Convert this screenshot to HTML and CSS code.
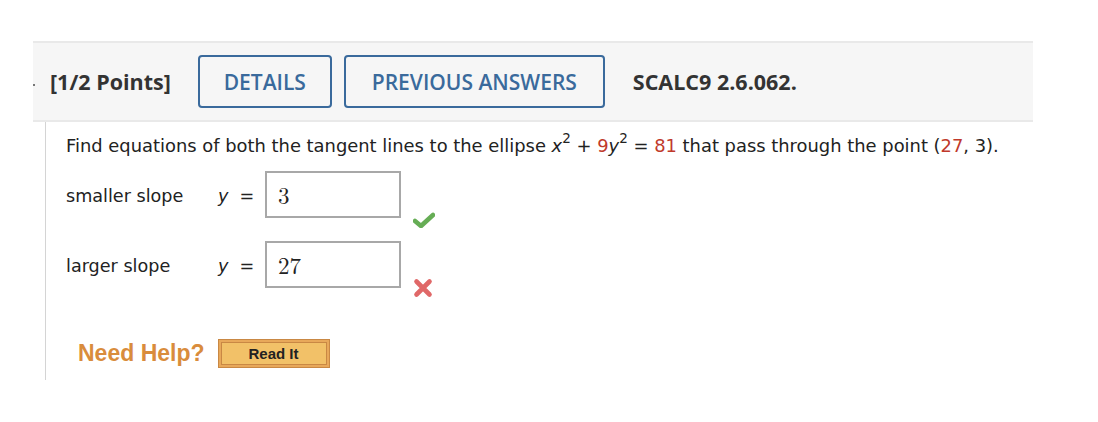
FILE: index.html
```html
<!DOCTYPE html>
<html>
<head>
<meta charset="utf-8">
<link rel="stylesheet" href="styles.css">
</head>
<body>
<div class="wrap">
  <div class="head">
    <span class="dot"></span>
    <span class="points">[1/2 Points]</span>
    <button class="btn btn-details">DETAILS</button>
    <button class="btn btn-prev">PREVIOUS ANSWERS</button>
    <span class="code">SCALC9 2.6.062.</span>
  </div>
  <div class="body">
    <p class="q">Find equations of both the tangent lines to the ellipse <i>x</i><sup>2</sup> + <span class="red">9</span><i>y</i><sup>2</sup> = <span class="red">81</span> that pass through the point (<span class="red">27</span>, 3).</p>
    <div class="row">
      <span class="lbl">smaller slope</span>
      <span class="eq"><i>y</i> &nbsp;=</span>
      <span class="box">3</span>
      <svg class="mark ok" width="22" height="16" viewBox="0 0 22 16"><path d="M2 9 L8 14 L20 3" fill="none" stroke="#66ad55" stroke-width="4.6" stroke-linecap="round" stroke-linejoin="round"/></svg>
    </div>
    <div class="row">
      <span class="lbl">larger slope</span>
      <span class="eq"><i>y</i> &nbsp;=</span>
      <span class="box">27</span>
      <svg class="mark bad" width="20" height="20" viewBox="0 0 20 20"><path d="M3.5 3.5 L16.5 16.5 M16.5 3.5 L3.5 16.5" fill="none" stroke="#e06868" stroke-width="4.6" stroke-linecap="round"/></svg>
    </div>
    <div class="help">
      <span class="need">Need Help?</span>
      <span class="read"><span class="read-in">Read It</span></span>
    </div>
  </div>
</div>
</body>
</html>
```

FILE: styles.css
```css
html, body { margin: 0; padding: 0; background: #fff; }
.wrap { margin: 41px 0 0 33px; width: 1000px; }
.head {
  height: 77px;
  background: #f6f6f6;
  border-top: 2px solid #e9e9e9;
  border-bottom: 2px solid #e9e9e9;
  display: flex;
  align-items: center;
  font-family: "Open Sans", sans-serif;
}
.dot { width: 2px; height: 2px; background: #777; margin-top: 6px; }
.points { margin-left: 15px; font-weight: 700; font-size: 21.5px; color: #333; }
.btn {
  font-family: "Open Sans", sans-serif;
  font-weight: 600;
  font-size: 21px;
  color: #3a6a9c;
  background: #f6f6f6;
  border: 2px solid #3a6a9c;
  border-radius: 4px;
  height: 53px;
  padding: 0;
}
.btn-details { margin-left: 27px; width: 134px; }
.btn-prev { margin-left: 12px; width: 261px; }
.code { margin-left: 28px; font-weight: 700; font-size: 21.5px; color: #333; }
.body {
  margin-left: 12px;
  border-left: 1px solid #d4d4d4;
  padding-left: 20px;
  height: 258px;
  font-family: "DejaVu Sans", Verdana, sans-serif;
  font-size: 17.6px;
  color: #222;
}
.q { margin: 0; padding-top: 12px; line-height: 24px; font-size: 17.9px; }
.q sup { font-size: 13.5px; line-height: 0; vertical-align: 9px; }
.red { color: #c0392b; }
.row { display: flex; align-items: center; height: 47px; margin-top: 13px; }
.row + .row { margin-top: 23px; }
.lbl { width: 152px; padding-top: 3px; }
.eq { width: 47px; padding-top: 3px; }
.box {
  box-sizing: border-box;
  width: 136px; height: 47px;
  border: 2px solid #a8a8a8;
  font-family: "Latin Modern Roman", "DejaVu Serif", serif;
  font-size: 23px;
  padding-left: 11px;
  display: flex; align-items: center;
}
.mark { align-self: flex-end; margin-left: 12px; margin-bottom: -10px; }
.help { display: flex; align-items: center; margin-top: 51px; padding-left: 12px; }
.need { font-family: "Liberation Sans", Arial, sans-serif; font-weight: 700; font-size: 23px; color: #d98c3c; }
.read {
  margin-left: 13px;
  width: 112px; height: 29px;
  box-sizing: border-box;
  background: #e8a85a;
  border: 1px solid #c98844;
  padding: 2px;
  display: flex;
}
.read-in {
  flex: 1;
  background: #f2c168;
  border: 1px solid #c98844;
  font-family: "Liberation Sans", Arial, sans-serif;
  font-weight: 700;
  font-size: 15px;
  color: #222;
  display: flex; align-items: center; justify-content: center;
}
```
